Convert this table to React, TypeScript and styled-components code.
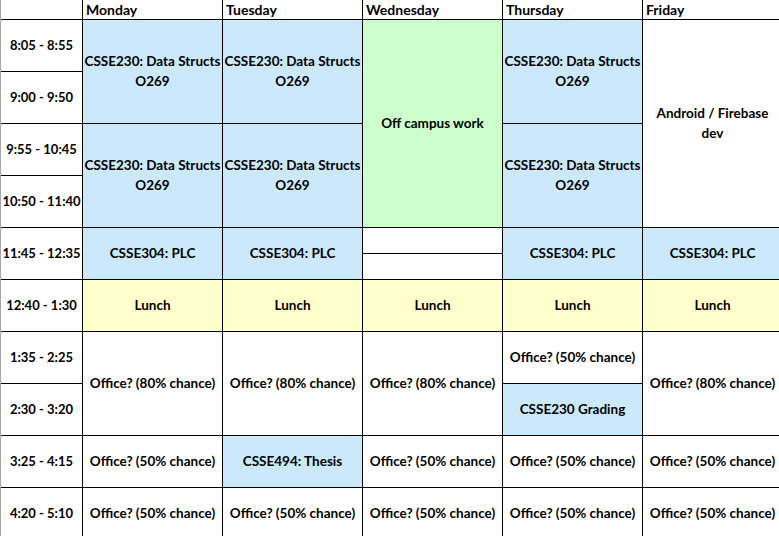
import styled, { createGlobalStyle } from "styled-components";

const GlobalStyle = createGlobalStyle`
  html, body {
    margin: 0;
    padding: 0;
    background: #ffffff;
    overflow: hidden;
  }
`;

type Tone = "white" | "blue" | "green" | "yellow";

const tones: Record<Tone, string> = {
  white: "#ffffff",
  blue: "#cce9fb",
  green: "#ccffcc",
  yellow: "#ffffcc",
};

const days = ["Monday", "Tuesday", "Wednesday", "Thursday", "Friday"];

const times = [
  "8:05 - 8:55",
  "9:00 - 9:50",
  "9:55 - 10:45",
  "10:50 - 11:40",
  "11:45 - 12:35",
  "12:40 - 1:30",
  "1:35 - 2:25",
  "2:30 - 3:20",
  "3:25 - 4:15",
  "4:20 - 5:10",
];

type Slot = { text?: string[]; tone?: Tone; span?: number; split?: boolean };

const ds = ["CSSE230: Data Structs", "O269"];
const o80 = ["Office? (80% chance)"];
const o50 = ["Office? (50% chance)"];

// cells per time row, in day order; rows covered by a span above are left out
const rows: Slot[][] = [
  [
    { text: ds, tone: "blue", span: 2 },
    { text: ds, tone: "blue", span: 2 },
    { text: ["Off campus work"], tone: "green", span: 4 },
    { text: ds, tone: "blue", span: 2 },
    { text: ["Android / Firebase", "dev"], span: 4 },
  ],
  [],
  [
    { text: ds, tone: "blue", span: 2 },
    { text: ds, tone: "blue", span: 2 },
    { text: ds, tone: "blue", span: 2 },
  ],
  [],
  [
    { text: ["CSSE304: PLC"], tone: "blue" },
    { text: ["CSSE304: PLC"], tone: "blue" },
    { split: true },
    { text: ["CSSE304: PLC"], tone: "blue" },
    { text: ["CSSE304: PLC"], tone: "blue" },
  ],
  [
    { text: ["Lunch"], tone: "yellow" },
    { text: ["Lunch"], tone: "yellow" },
    { text: ["Lunch"], tone: "yellow" },
    { text: ["Lunch"], tone: "yellow" },
    { text: ["Lunch"], tone: "yellow" },
  ],
  [
    { text: o80, span: 2 },
    { text: o80, span: 2 },
    { text: o80, span: 2 },
    { text: o50 },
    { text: o80, span: 2 },
  ],
  [{ text: ["CSSE230 Grading"], tone: "blue" }],
  [
    { text: o50 },
    { text: ["CSSE494: Thesis"], tone: "blue" },
    { text: o50 },
    { text: o50 },
    { text: o50 },
  ],
  [{ text: o50 }, { text: o50 }, { text: o50 }, { text: o50 }, { text: o50 }],
];

export default function App() {
  return (
    <>
      <GlobalStyle />
      <Schedule>
        <HeadCell />
        {days.map((d) => (
          <HeadCell key={d}>{d}</HeadCell>
        ))}
        {rows.map((row, i) => (
          <Row key={times[i]} time={times[i]} cells={row} />
        ))}
      </Schedule>
    </>
  );
}

const Row = ({ time, cells }: { time: string; cells: Slot[] }) => (
  <>
    <TimeCell>{time}</TimeCell>
    {cells.map((c, j) =>
      c.split ? (
        <SplitCell key={j}>
          <Half />
          <Half />
        </SplitCell>
      ) : (
        <Cell key={j} $tone={c.tone ?? "white"} $span={c.span ?? 1}>
          {c.text?.map((line) => (
            <span key={line}>{line}</span>
          ))}
        </Cell>
      )
    )}
  </>
);

// grid with 1px gaps drawn by the black background
const Schedule = styled.div`
  display: grid;
  grid-template-columns: 81px repeat(5, 139px);
  grid-template-rows: 19px repeat(10, 51px);
  gap: 1px;
  width: max-content;
  background: #000000;
  border-left: 1px solid #a6a6a6;
  font-family: Lato, "Open Sans", sans-serif;
  font-weight: 700;
  font-size: 13.5px;
  color: #000000;
`;

const HeadCell = styled.div`
  background: #ffffff;
  padding-left: 3px;
  line-height: 19px;
  font-size: 14px;
  white-space: nowrap;
`;

const TimeCell = styled.div`
  background: #ffffff;
  display: flex;
  align-items: center;
  justify-content: center;
  padding-bottom: 1px;
  font-size: 13px;
  white-space: nowrap;
`;

const Cell = styled.div<{ $tone: Tone; $span: number }>`
  grid-row: span ${(p) => p.$span};
  background: ${(p) => tones[p.$tone]};
  display: flex;
  flex-direction: column;
  align-items: center;
  justify-content: center;
  padding-bottom: 1px;
  line-height: 20px;
  text-align: center;
  white-space: nowrap;
`;

const SplitCell = styled.div`
  display: flex;
  flex-direction: column;
  gap: 1px;
  background: #000000;
`;

const Half = styled.div`
  flex: 1;
  background: #ffffff;
`;
